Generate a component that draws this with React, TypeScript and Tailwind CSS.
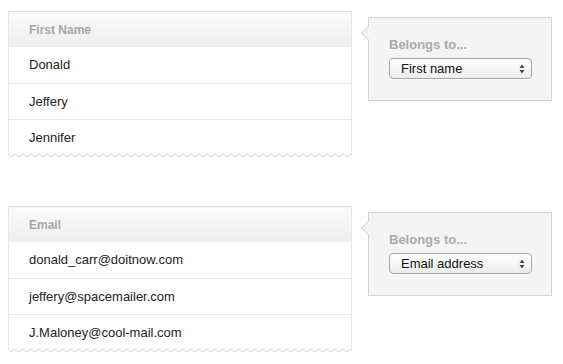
import React from "react";

const font = { fontFamily: '"Liberation Sans", Arial, Helvetica, sans-serif' };

function Wave() {
  return (
    <svg className="block w-full h-[6px]" preserveAspectRatio="none">
      <defs>
        <pattern id="wv" width="8" height="6" patternUnits="userSpaceOnUse">
          <path d="M0 1.5 Q2 5 4 3 Q6 1 8 1.5" fill="none" stroke="#d6d6d6" strokeWidth="1" />
        </pattern>
      </defs>
      <rect x="0" y="0" width="100%" height="6" fill="url(#wv)" />
    </svg>
  );
}

function SelectBox({ label }: { label: string }) {
  return (
    <div className="relative w-[143px] h-[21px] rounded-[4px] border border-[#a6a6a6] bg-gradient-to-b from-[#ffffff] to-[#ececec] shadow-[0_1px_0_rgba(255,255,255,0.8)] flex items-center pl-[11px] text-[13px] text-[#111]">
      <span>{label}</span>
      <svg className="absolute right-[6px] top-[5px]" width="6" height="10" viewBox="0 0 6 10">
        <path d="M3 0.5 L5.5 4 L0.5 4 Z" fill="#444" />
        <path d="M3 9.5 L5.5 6 L0.5 6 Z" fill="#444" />
      </svg>
    </div>
  );
}

function Popover({ label }: { label: string }) {
  return (
    <div className="relative mt-[6px] ml-[16px] w-[184px] h-[84px] border border-[#d4d4d4] bg-[#f4f4f4] pt-[19px] pl-[20px]">
      <div className="absolute left-[-6px] top-[10px] w-[10px] h-[10px] rotate-45 bg-[#f4f4f4] border-l border-b border-[#d4d4d4]" />
      <div className="text-[13px] font-bold text-[#ababab] leading-[16px]">Belongs to...</div>
      <div className="mt-[5px]">
        <SelectBox label={label} />
      </div>
    </div>
  );
}

function Table({ header, rows }: { header: string; rows: string[] }) {
  return (
    <div className="w-[344px]">
      <div className="border-x border-[#e6e6e6] border-t border-t-[#d8d8d8] bg-white">
        <div className="h-[35px] flex items-center pl-[20px] bg-gradient-to-b from-[#fbfbfb] to-[#eeeeee] text-[12px] font-bold text-[#a6a6a6]">
          {header}
        </div>
        {rows.map((r, i) => (
          <div
            key={i}
            className={`h-[36px] flex items-center pl-[20px] text-[13px] text-[#222] ${i > 0 ? "border-t border-[#e8e8e8]" : ""}`}
          >
            {r}
          </div>
        ))}
      </div>
      <div className="-mt-[2px]">
        <Wave />
      </div>
    </div>
  );
}

export default function App() {
  return (
    <div style={font} className="w-[563px] h-[364px] bg-white pl-[8px] pt-[11px] flex flex-col gap-[47px]">
      <div className="flex items-start">
        <Table header="First Name" rows={["Donald", "Jeffery", "Jennifer"]} />
        <Popover label="First name" />
      </div>
      <div className="flex items-start">
        <Table
          header="Email"
          rows={["donald_carr@doitnow.com", "jeffery@spacemailer.com", "J.Maloney@cool-mail.com"]}
        />
        <Popover label="Email address" />
      </div>
    </div>
  );
}
